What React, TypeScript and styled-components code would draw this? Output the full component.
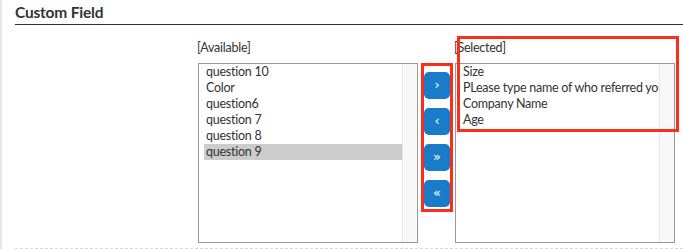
import React from "react";
import styled, { createGlobalStyle } from "styled-components";

const Global = createGlobalStyle`
  html, body { margin: 0; padding: 0; background: #fff; }
  body { font-family: "Source Sans Pro", Lato, "Noto Sans", sans-serif; color: #333; }
  * { box-sizing: border-box; }
`;

const Section = styled.section`
  width: 683px;
  height: 249px;
  border-left: 2px solid #e6e6e6;
  padding-left: 13px;
  overflow: hidden;
`;

const Header = styled.h2`
  margin: 0;
  padding: 2px 0 2px;
  font-size: 15.5px;
  line-height: 20px;
  font-weight: 700;
  letter-spacing: -0.2px;
  color: #333;
  border-bottom: 1px solid #333;
`;

const Body = styled.div`
  display: flex;
  align-items: flex-start;
  padding: 15px 0 0 183px;
`;

const Column = styled.div<{ $ml?: number }>`
  position: relative;
  width: 220px;
  margin-left: ${(p) => p.$ml ?? 0}px;
  display: flex;
  flex-direction: column;
  gap: 7px;
`;

const Label = styled.div<{ $shift?: number }>`
  font-size: 12.5px;
  letter-spacing: -0.25px;
  line-height: 16px;
  color: #333;
  margin-left: ${(p) => p.$shift ?? 0}px;
`;

const ListBox = styled.div`
  height: 180px;
  border: 1px solid #999;
  display: flex;
  background: #fff;
`;

const Options = styled.div`
  flex: 1;
  min-width: 0;
  padding-left: 5px;
  overflow: hidden;
`;

const Option = styled.div<{ $selected?: boolean }>`
  font-size: 12.5px;
  letter-spacing: -0.25px;
  line-height: 16px;
  height: 16px;
  padding-left: 2px;
  white-space: nowrap;
  overflow: hidden;
  color: #333;
  background: ${(p) => (p.$selected ? "#cccccc" : "transparent")};
`;

const Scrollbar = styled.div`
  width: 15px;
  background: #f8f8f8;
  border-left: 1px solid #e8e8e8;
`;

const ButtonColumn = styled.div`
  width: 32px;
  margin-top: 23px;
  margin-left: 3px;
  border: 3px solid #f72f1b;
  padding: 6px 0 2px;
  display: flex;
  flex-direction: column;
  gap: 9px;
`;

const MoveButton = styled.button`
  width: 26px;
  height: 27px;
  border: none;
  border-radius: 5px;
  background: #1a7bc9;
  color: #fff;
  font-family: "DejaVu Sans", sans-serif;
  font-size: 13px;
  line-height: 27px;
  padding: 0 0 2px;
  display: flex;
  align-items: center;
  justify-content: center;
`;

const Highlight = styled.div`
  position: absolute;
  left: 2px;
  top: -4px;
  width: 222px;
  height: 96px;
  border: 3px solid #f72f1b;
  pointer-events: none;
`;

const Footer = styled.div`
  margin-top: 5px;
  border-top: 1px dashed #d9d9d9;
`;

const available = ["question 10", "Color", "question6", "question 7", "question 8", "question 9"];
const selected = ["Size", "PLease type name of who referred you", "Company Name", "Age"];

export default function App() {
  return (
    <>
      <Global />
      <Section>
        <Header>Custom Field</Header>
        <Body>
          <Column>
            <Label $shift={-1}>[Available]</Label>
            <ListBox>
              <Options>
                {available.map((a) => (
                  <Option key={a} $selected={a === "question 9"}>{a}</Option>
                ))}
              </Options>
              <Scrollbar />
            </ListBox>
          </Column>
          <ButtonColumn>
            <MoveButton>›</MoveButton>
            <MoveButton>‹</MoveButton>
            <MoveButton>»</MoveButton>
            <MoveButton>«</MoveButton>
          </ButtonColumn>
          <Column $ml={2}>
            <Label $shift={-1}>[Selected]</Label>
            <ListBox>
              <Options>
                {selected.map((s) => (
                  <Option key={s}>{s}</Option>
                ))}
              </Options>
              <Scrollbar />
            </ListBox>
            <Highlight />
          </Column>
        </Body>
        <Footer />
      </Section>
    </>
  );
}
